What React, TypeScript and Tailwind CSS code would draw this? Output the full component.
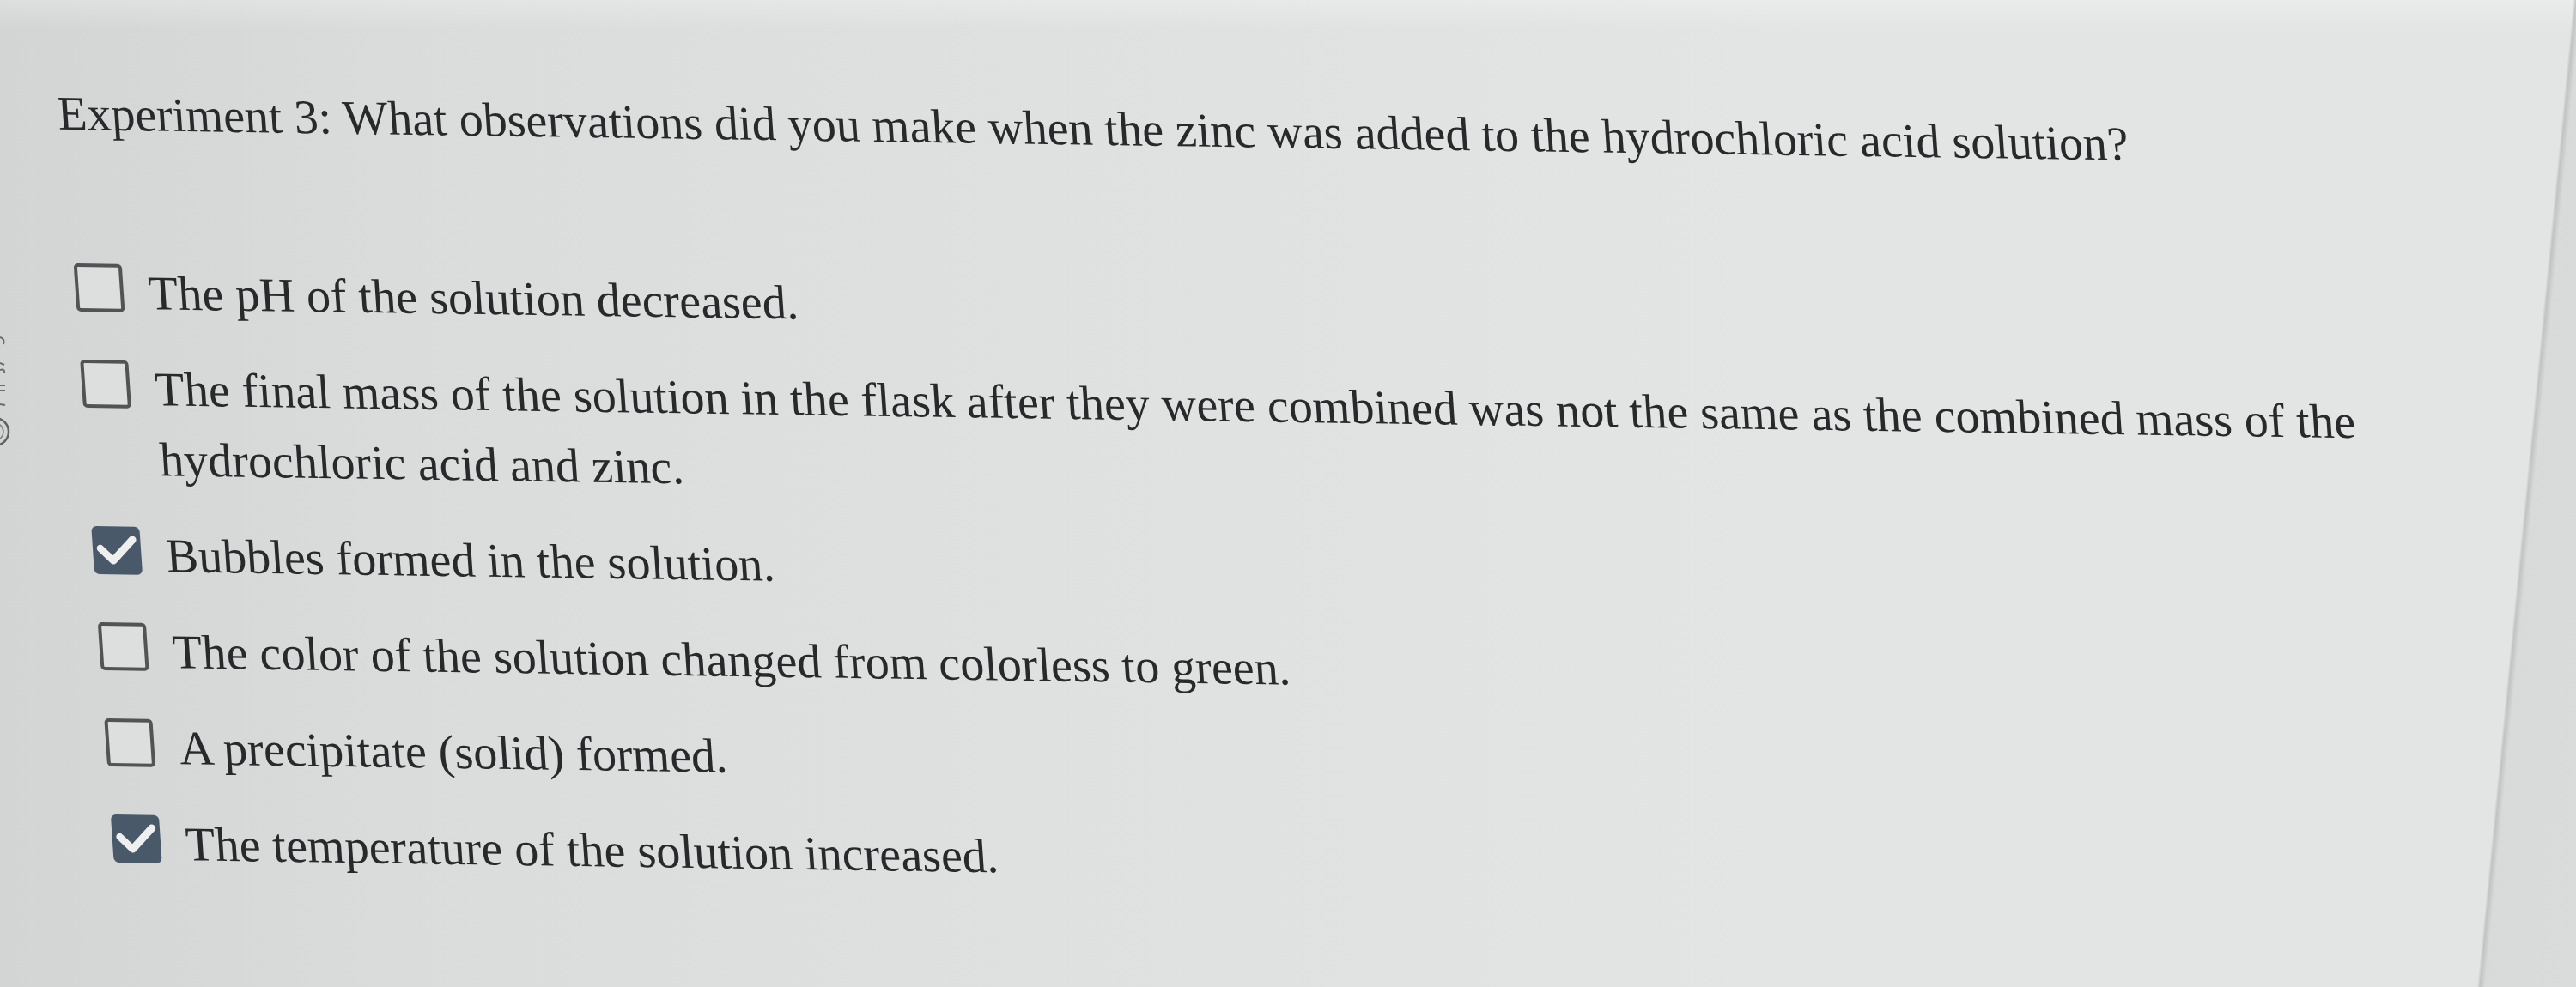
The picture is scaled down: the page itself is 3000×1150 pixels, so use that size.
import React from "react";

type Opt = { text: string; checked: boolean };

const options: Opt[] = [
  { text: "The pH of the solution decreased.", checked: false },
  {
    text: "The final mass of the solution in the flask after they were combined was not the same as the combined mass of the hydrochloric acid and zinc.",
    checked: false,
  },
  { text: "Bubbles formed in the solution.", checked: true },
  { text: "The color of the solution changed from colorless to green.", checked: false },
  { text: "A precipitate (solid) formed.", checked: false },
  { text: "The temperature of the solution increased.", checked: true },
];

function Box({ checked }: { checked: boolean }) {
  if (checked) {
    return (
      <span className="mt-[8px] flex size-[56px] shrink-0 items-center justify-center rounded-[6px] bg-[#4a596a]">
        <svg viewBox="0 0 56 56" className="size-[56px]">
          <path
            d="M9 26 L23 40 L47 15"
            fill="none"
            stroke="#eef0f0"
            strokeWidth="8.5"
            strokeLinecap="round"
            strokeLinejoin="round"
          />
        </svg>
      </span>
    );
  }
  return (
    <span className="mt-[8px] block size-[56px] shrink-0 rounded-[5px] border-[4px] border-[#525355] bg-[#dcdfde]" />
  );
}

export default function App() {
  return (
    <div className="relative h-screen w-full overflow-hidden bg-[linear-gradient(95.56deg,transparent_96.3%,rgba(150,155,153,0.45)_96.4%,rgba(195,199,198,0.35)_96.6%,rgba(195,199,198,0.3)_100%),linear-gradient(180deg,rgba(255,255,255,0.25)_0%,rgba(255,255,255,0)_3%),linear-gradient(90deg,#d2d5d4_0%,#d9dcdb_15%,#dfe1e0_40%,#e3e5e4_70%,#e3e5e4_95%)] [font-family:'Liberation_Serif','Times_New_Roman',serif]">
      <svg
        className="absolute left-0 top-[385px]"
        width="14"
        height="140"
        viewBox="0 0 14 140"
      >
        <path d="M0 8 Q6 10 4 16" fill="none" stroke="#6b6d6e" strokeWidth="2" />
        <path d="M0 38 L5 40 M0 46 Q6 44 5 50" fill="none" stroke="#6b6d6e" strokeWidth="2" />
        <path d="M0 64 L6 64 M0 70 L6 70" fill="none" stroke="#6b6d6e" strokeWidth="2" />
        <path d="M0 86 L6 87" fill="none" stroke="#6b6d6e" strokeWidth="2" />
        <circle cx="-6" cy="118" r="16" fill="none" stroke="#5e6061" strokeWidth="2.5" />
        <circle cx="-6" cy="118" r="10" fill="none" stroke="#7a7c7d" strokeWidth="1.5" />
      </svg>
      <div className="origin-top-left skew-x-[3.85deg] skew-y-[0.85deg] pl-[58px] pt-[90px] text-[56px] leading-[82px] text-[#27292b]">
        <h1 className="whitespace-nowrap font-normal">
          Experiment 3: What observations did you make when the zinc was added to the hydrochloric acid solution?
        </h1>
        <div className="mt-[126px] flex flex-col gap-[30px] pl-[7px]">
          {options.map((o, i) => (
            <label key={i} className="flex items-start gap-[29px]">
              <Box checked={o.checked} />
              <span className="w-[2700px]">{o.text}</span>
            </label>
          ))}
        </div>
      </div>
    </div>
  );
}
